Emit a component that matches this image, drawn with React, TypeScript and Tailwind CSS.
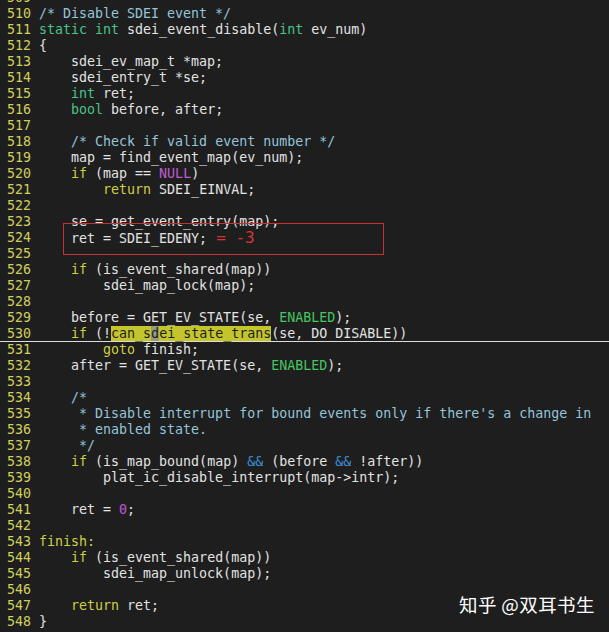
import React from "react";

type Tok = { t: string; c?: string };

const C = {
  cm: "text-[#93c4da]",
  ty: "text-[#46c48a]",
  st: "text-[#cfcf45]",
  k: "text-[#c05cd6]",
  g: "text-[#45c45f]",
  b: "text-[#3b8fd6]",
};

const p = (t: string): Tok => ({ t });
const cm = (t: string): Tok => ({ t, c: C.cm });
const ty = (t: string): Tok => ({ t, c: C.ty });
const st = (t: string): Tok => ({ t, c: C.st });
const k = (t: string): Tok => ({ t, c: C.k });
const g = (t: string): Tok => ({ t, c: C.g });
const b = (t: string): Tok => ({ t, c: C.b });
const hl = (t: string): Tok => ({ t, c: "bg-[#c4c42c] text-[#1e1e1e]" });
const cur = (t: string): Tok => ({ t, c: "bg-[#9a9a7a] text-[#1e1e1e]" });

const lines: Tok[][] = [
  [],
  [cm("/* Disable SDEI event */")],
  [ty("static"), p(" "), ty("int"), p(" sdei_event_disable("), ty("int"), p(" ev_num)")],
  [p("{")],
  [p("    sdei_ev_map_t *map;")],
  [p("    sdei_entry_t *se;")],
  [p("    "), ty("int"), p(" ret;")],
  [p("    "), ty("bool"), p(" before, after;")],
  [],
  [p("    "), cm("/* Check if valid event number */")],
  [p("    map = find_event_map(ev_num);")],
  [p("    "), st("if"), p(" (map == "), k("NULL"), p(")")],
  [p("        "), st("return"), p(" SDEI_EINVAL;")],
  [],
  [p("    se = get_event_entry(map);")],
  [p("    ret = SDEI_EDENY;")],
  [],
  [p("    "), st("if"), p(" (is_event_shared(map))")],
  [p("        sdei_map_lock(map);")],
  [],
  [p("    before = GET_EV_STATE(se, "), g("ENABLED"), p(");")],
  [p("    "), st("if"), p(" (!"), hl("can_s"), cur("d"), hl("ei_state_trans"), p("(se, DO_DISABLE))")],
  [p("        "), st("goto"), p(" finish;")],
  [p("    after = GET_EV_STATE(se, "), g("ENABLED"), p(");")],
  [],
  [p("    "), cm("/*")],
  [p("     "), cm("* Disable interrupt for bound events only if there's a change in")],
  [p("     "), cm("* enabled state.")],
  [p("     "), cm("*/")],
  [p("    "), st("if"), p(" (is_map_bound(map) "), b("&&"), p(" (before "), b("&&"), p(" !after))")],
  [p("        plat_ic_disable_interrupt(map->intr);")],
  [],
  [p("    ret = "), k("0"), p(";")],
  [],
  [st("finish:")],
  [p("    "), st("if"), p(" (is_event_shared(map))")],
  [p("        sdei_map_unlock(map);")],
  [],
  [p("    "), st("return"), p(" ret;")],
  [p("}")],
];

export default function App() {
  return (
    <div
      className="relative w-[609px] h-[632px] overflow-hidden bg-[#1e1e1e] text-[#e2e2e2]"
      style={{ fontFamily: '"DejaVu Sans Mono", "Liberation Mono", monospace' }}
    >
      <div className="flex flex-col mt-[-10px] text-[13.3px] leading-[16px]">
        {lines.map((toks, i) => {
          const n = 509 + i;
          return (
            <div
              key={n}
              className={
                "flex h-[16px] whitespace-pre pl-[7px] " +
                (n === 530 ? "shadow-[inset_0_-1px_0_#dcdcdc]" : "")
              }
            >
              <span className="w-[32px] shrink-0 text-[#d0cf5c]">{n}</span>
              <span>
                {toks.map((tk, j) => (
                  <span key={j} className={tk.c}>
                    {tk.t}
                  </span>
                ))}
                {n === 524 && (
                  <span
                    className="ml-[9px] text-[16px] text-[#d43636]"
                    style={{ fontFamily: '"DejaVu Sans Mono", monospace' }}
                  >
                    = -3
                  </span>
                )}
              </span>
            </div>
          );
        })}
      </div>

      <div className="absolute left-[63px] top-[223px] w-[321px] h-[32px] border border-[#c83232]" />

      <div
        className="absolute left-[459px] top-[592px] text-[18.5px] tracking-[0.4px] leading-[24px] text-white whitespace-pre"
        style={{ fontFamily: '"Noto Sans CJK SC", "Noto Sans", sans-serif' }}
      >
        知乎 @双耳书生
      </div>
    </div>
  );
}
